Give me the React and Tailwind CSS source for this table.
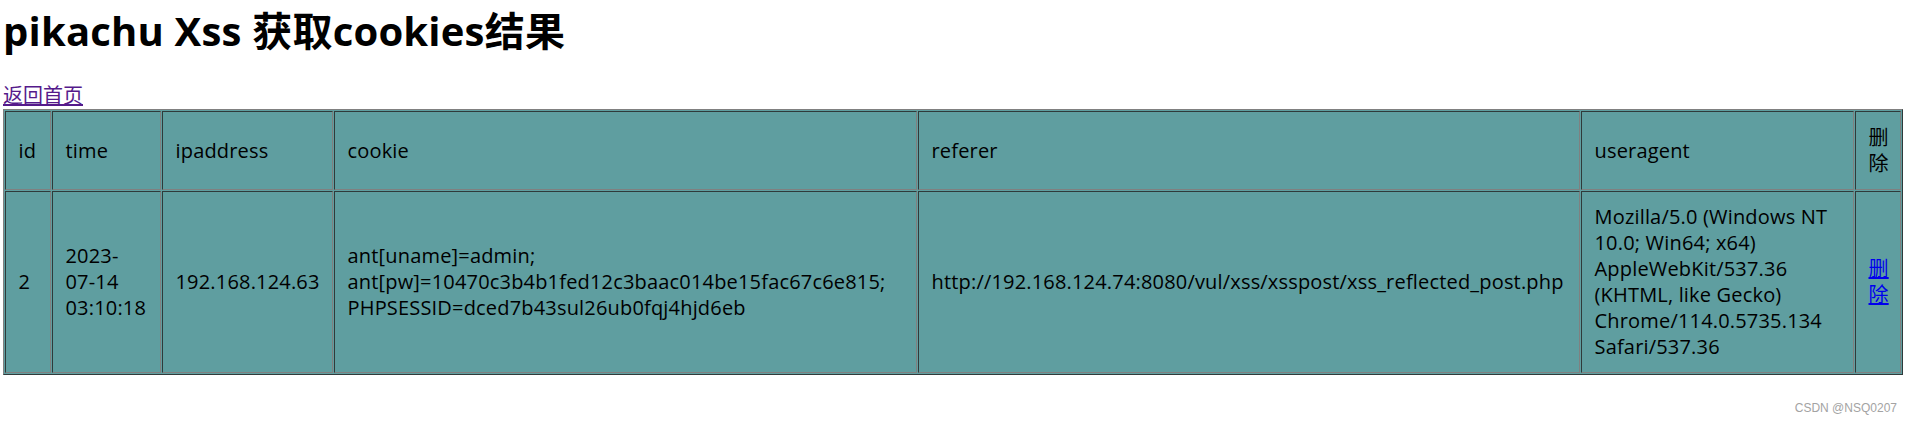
import React from 'react';

const cell =
  'border border-t-[#2f3a3a] border-l-[#2f3a3a] border-b-[#808080] border-r-[#808080] px-[12.5px] align-middle text-left font-normal';

const App = () => {
  return (
    <div className="relative h-[425px] w-[1913px] bg-white px-[3px] pt-[4px] font-['Open_Sans','Noto_Sans_CJK_SC',sans-serif] text-black">
      {/* Title */}
      <h1 className="mb-[26px] text-[40px] leading-[53px] font-bold tracking-[0.2px]">pikachu Xss 获取cookies结果</h1>

      <a href="#" className="block w-fit text-[20px] leading-[26px] text-[#551a8b] underline">
        返回首页
      </a>

      {/* Cookie table */}
      <table className="w-[1900px] table-fixed border-separate border-spacing-[1px] border border-t-[#808080] border-l-[#808080] border-b-[#2f3a3a] border-r-[#2f3a3a] bg-[#5f9ea0] text-[20px] leading-[26px] tracking-[0.18px]">
        <tbody>
          <tr className="h-[79px]">
            <td className={`${cell} w-[46px]`}>id</td>
            <td className={`${cell} w-[109px]`}>time</td>
            <td className={`${cell} w-[171px]`}>ipaddress</td>
            <td className={`${cell} w-[583px]`}>cookie</td>
            <td className={`${cell} w-[662px]`}>referer</td>
            <td className={`${cell} w-[273px]`}>useragent</td>
            <td className={`${cell} w-[46px]`}>删除</td>
          </tr>
          <tr className="h-[182px]">
            <td className={cell}>2</td>
            <td className={`${cell} pr-[16px]`}>2023-07-14 03:10:18</td>
            <td className={cell}>192.168.124.63</td>
            <td className={cell}>
              ant[uname]=admin; ant[pw]=10470c3b4b1fed12c3baac014be15fac67c6e815; PHPSESSID=dced7b43sul26ub0fqj4hjd6eb
            </td>
            <td className={cell}>http://192.168.124.74:8080/vul/xss/xsspost/xss_reflected_post.php</td>
            <td className={cell}>
              Mozilla/5.0 (Windows NT 10.0; Win64; x64) AppleWebKit/537.36 (KHTML, like Gecko) Chrome/114.0.5735.134
              Safari/537.36
            </td>
            <td className={cell}>
              <a href="#" className="text-[#0000ee] underline">
                删除
              </a>
            </td>
          </tr>
        </tbody>
      </table>

      {/* Watermark */}
      <span className="absolute right-[16px] bottom-[10px] font-['Liberation_Sans',sans-serif] text-[12px] leading-[14px] text-[#a3a3a3]">
        CSDN @NSQ0207
      </span>
    </div>
  );
};

export default App;
